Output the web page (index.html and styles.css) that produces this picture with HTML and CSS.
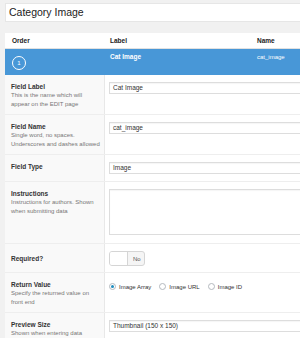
FILE: index.html
```html
<!DOCTYPE html>
<html>
<head>
<meta charset="utf-8">
<link rel="stylesheet" href="styles.css">
</head>
<body>
<div class="page">
  <div class="title">Category Image</div>
  <div class="panel">
    <div class="thead">
      <div class="th th-order">Order</div>
      <div class="th th-label">Label</div>
      <div class="th th-name">Name</div>
    </div>
    <div class="handle">
      <div class="h-order"><span class="num">1</span></div>
      <div class="h-label">Cat Image</div>
      <div class="h-name">cat_image</div>
    </div>
    <div class="settings">
      <div class="row">
        <div class="lab"><div class="lt">Field Label</div><div class="ld">This is the name which will<br>appear on the EDIT page</div></div>
        <div class="val"><div class="input">Cat Image</div></div>
      </div>
      <div class="row">
        <div class="lab"><div class="lt">Field Name</div><div class="ld">Single word, no spaces.<br>Underscores and dashes allowed</div></div>
        <div class="val"><div class="input">cat_image</div></div>
      </div>
      <div class="row">
        <div class="lab"><div class="lt">Field Type</div></div>
        <div class="val"><div class="input">Image</div></div>
      </div>
      <div class="row">
        <div class="lab"><div class="lt">Instructions</div><div class="ld">Instructions for authors. Shown<br>when submitting data</div></div>
        <div class="val val-ta"><div class="textarea"></div></div>
      </div>
      <div class="row">
        <div class="lab"><div class="lt lt-req">Required?</div></div>
        <div class="val val-toggle"><div class="toggle"><span class="knob"></span><span class="no">No</span></div></div>
      </div>
      <div class="row">
        <div class="lab"><div class="lt">Return Value</div><div class="ld">Specify the returned value on<br>front end</div></div>
        <div class="val val-radios">
          <div class="radios">
            <span class="radio"><span class="dot on"></span>Image Array</span>
            <span class="radio"><span class="dot"></span>Image URL</span>
            <span class="radio"><span class="dot"></span>Image ID</span>
          </div>
        </div>
      </div>
      <div class="row">
        <div class="lab"><div class="lt">Preview Size</div><div class="ld">Shown when entering data</div></div>
        <div class="val"><div class="input">Thumbnail (150 x 150)</div></div>
      </div>
    </div>
  </div>
</div>
</body>
</html>
```
FILE: styles.css
```css
html, body {
  margin: 0;
  padding: 0;
  overflow: hidden;
  background: #f1f1f1;
}
.page {
  width: 340px;
  padding: 3px 0 0 5px;
  font-family: "Liberation Sans", Arial, sans-serif;
  color: #333;
}
.title {
  height: 19px;
  box-sizing: border-box;
  background: #fff;
  border: 1px solid #e6e6e6;
  font-size: 10.5px;
  line-height: 17px;
  padding-left: 3px;
  color: #222;
}
.panel {
  margin-top: 11px;
  background: #fff;
}
.thead {
  display: flex;
  height: 16px;
  align-items: center;
  border-bottom: 1px solid #e1e1e1;
  box-sizing: border-box;
  font-size: 6.5px;
  font-weight: bold;
  color: #222;
}
.th-order { width: 105px; padding-left: 7px; box-sizing: border-box; }
.th-label { width: 147px; }
.handle {
  display: flex;
  height: 26px;
  background: #4897d7;
  color: #fff;
}
.h-order {
  width: 105px;
  padding-left: 7px;
  box-sizing: border-box;
  display: flex;
  align-items: center;
}
.num {
  width: 14px;
  height: 14px;
  box-sizing: border-box;
  border: 1px solid #fff;
  border-radius: 50%;
  font-size: 6px;
  display: flex;
  align-items: center;
  justify-content: center;
  margin-top: 1px;
}
.h-label {
  width: 147px;
  font-size: 6.5px;
  font-weight: bold;
  padding-top: 4px;
}
.h-name {
  font-size: 6px;
  padding-top: 5px;
}
.row {
  display: grid;
  grid-template-columns: 100px 1fr;
  border-bottom: 1px solid #eeeeee;
}
.lab {
  background: #f9f9f9;
  border-right: 1px solid #e8e8e8;
  padding: 7px 2px 6px 6px;
  white-space: nowrap;
}
.lt {
  font-size: 6.5px;
  font-weight: bold;
  line-height: 9px;
  color: #333;
}
.lt-req { padding-top: 3px; }
.ld {
  font-size: 6px;
  line-height: 8.5px;
  color: #777;
}
.val {
  padding: 7px 0 7px 4px;
}
.val-ta { padding-bottom: 8px; }
.val-toggle { padding-bottom: 6px; }
.input {
  height: 12px;
  box-sizing: border-box;
  border: 1px solid #dddddd;
  box-shadow: inset 0 1px 1px rgba(0,0,0,0.04);
  font-size: 6.5px;
  line-height: 10px;
  padding-left: 3px;
  color: #333;
}
.textarea {
  height: 46px;
  box-sizing: border-box;
  border: 1px solid #dddddd;
  box-shadow: inset 0 1px 1px rgba(0,0,0,0.04);
}
.toggle {
  width: 36px;
  height: 15px;
  box-sizing: border-box;
  border: 1px solid #d5d5d5;
  border-radius: 3px;
  background: #f5f5f5;
  display: flex;
  align-items: center;
  font-size: 6px;
  color: #555;
}
.knob {
  width: 17px;
  height: 13px;
  background: #fff;
  border-right: 1px solid #d5d5d5;
  border-radius: 2px 0 0 2px;
}
.no { margin-left: 5px; }
.val-radios { padding-top: 10px; }
.radios {
  display: flex;
  gap: 8px;
  font-size: 6px;
  color: #333;
}
.radio {
  display: flex;
  align-items: center;
  gap: 3px;
}
.dot {
  width: 7px;
  height: 7px;
  box-sizing: border-box;
  border: 1px solid #b4b9be;
  border-radius: 50%;
  background: #fff;
  display: flex;
  align-items: center;
  justify-content: center;
}
.dot.on::after {
  content: "";
  width: 3px;
  height: 3px;
  border-radius: 50%;
  background: #1e8cbe;
}
```
